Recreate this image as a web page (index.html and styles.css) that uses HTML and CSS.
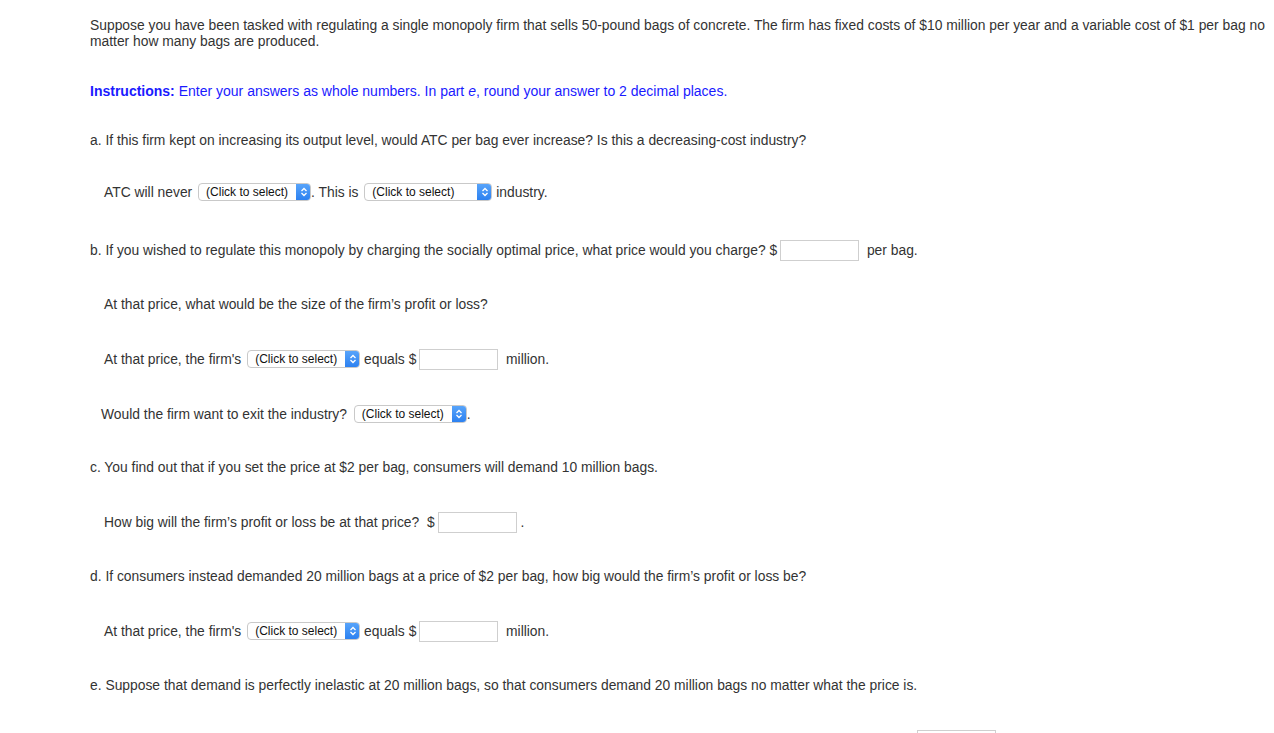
FILE: index.html
```html
<!DOCTYPE html>
<html>
<head>
<meta charset="utf-8">
<link rel="stylesheet" href="styles.css">
</head>
<body>
<div class="page">
  <p class="intro">Suppose you have been tasked with regulating a single monopoly firm that sells 50-pound bags of concrete. The firm has fixed costs of $10 million per year and a variable cost of $1 per bag no matter how many bags are produced.</p>

  <div class="row instr"><b>Instructions:</b>&nbsp;Enter your answers as whole numbers. In part <i>e</i>, round your answer to 2 decimal places.</div>

  <div class="row q ga">a. If this firm kept on increasing its output level, would ATC per bag ever increase? Is this a decreasing-cost industry?</div>

  <div class="row sub gatc">ATC will never&nbsp;<span class="sel w113"><span class="sel-t">(Click to select)</span><span class="step"><svg width="8" height="10" viewBox="0 0 8 10"><path d="M1.5 4 L4 1.5 L6.5 4 M1.5 6 L4 8.5 L6.5 6" fill="none" stroke="#fff" stroke-width="1.3"/></svg></span></span>. This is&nbsp;<span class="sel w128"><span class="sel-t">(Click to select)</span><span class="step"><svg width="8" height="10" viewBox="0 0 8 10"><path d="M1.5 4 L4 1.5 L6.5 4 M1.5 6 L4 8.5 L6.5 6" fill="none" stroke="#fff" stroke-width="1.3"/></svg></span></span>&nbsp;industry.</div>

  <div class="row q gb">b. If you wished to regulate this monopoly by charging the socially optimal price, what price would you charge? $<span class="inp"></span>&nbsp;&nbsp;per bag.</div>

  <div class="row sub">At that price, what would be the size of the firm’s profit or loss?</div>

  <div class="row sub g33">At that price, the firm's&nbsp;<span class="sel w113"><span class="sel-t">(Click to select)</span><span class="step"><svg width="8" height="10" viewBox="0 0 8 10"><path d="M1.5 4 L4 1.5 L6.5 4 M1.5 6 L4 8.5 L6.5 6" fill="none" stroke="#fff" stroke-width="1.3"/></svg></span></span>&nbsp;equals $<span class="inp"></span>&nbsp;&nbsp;million.</div>

  <div class="row sub2 g33">Would the firm want to exit the industry?&nbsp;<span class="sel w113 sel-gap"><span class="sel-t">(Click to select)</span><span class="step"><svg width="8" height="10" viewBox="0 0 8 10"><path d="M1.5 4 L4 1.5 L6.5 4 M1.5 6 L4 8.5 L6.5 6" fill="none" stroke="#fff" stroke-width="1.3"/></svg></span></span>.</div>

  <div class="row q g31">c. You find out that if you set the price at $2 per bag, consumers will demand 10 million bags.</div>

  <div class="row sub g33">How big will the firm’s profit or loss be at that price?&nbsp;&nbsp;$<span class="inp"></span>&nbsp;.</div>

  <div class="row q">d. If consumers instead demanded 20 million bags at a price of $2 per bag, how big would the firm’s profit or loss be?</div>

  <div class="row sub g33">At that price, the firm's&nbsp;<span class="sel w113"><span class="sel-t">(Click to select)</span><span class="step"><svg width="8" height="10" viewBox="0 0 8 10"><path d="M1.5 4 L4 1.5 L6.5 4 M1.5 6 L4 8.5 L6.5 6" fill="none" stroke="#fff" stroke-width="1.3"/></svg></span></span>&nbsp;equals $<span class="inp"></span>&nbsp;&nbsp;million.</div>

  <div class="row q">e. Suppose that demand is perfectly inelastic at 20 million bags, so that consumers demand 20 million bags no matter what the price is.</div>

  <div class="row last"><span class="inp"></span></div>
</div>
</body>
</html>
```

FILE: styles.css
```css
html, body {
  margin: 0;
  padding: 0;
  background: #fff;
  overflow: hidden;
}
.page {
  padding: 17px 0 0 90px;
  font-family: "Liberation Sans", Arial, sans-serif;
  font-size: 13.85px;
  color: #333;
  display: flex;
  flex-direction: column;
  height: 733px;
  box-sizing: border-box;
}
.intro {
  margin: 0;
  line-height: 16px;
}
.row {
  height: 22px;
  line-height: 22px;
  margin-top: 32px;
  display: flex;
  align-items: center;
  white-space: nowrap;
  flex-shrink: 0;
}
.instr {
  color: #1a1aff;
  display: block;
  font-size: 14px;
  margin-top: 31px;
}
.ga { margin-top: 27px; }
.gatc { margin-top: 30px; }
.gb { margin-top: 36px; }
.g33 { margin-top: 33px; }
.g31 { margin-top: 31px; }
.sub { padding-left: 14px; }
.sub2 { padding-left: 11px; }
.last { padding-left: 824px; align-items: flex-start; margin-top: 34px; }

.sel {
  display: inline-flex;
  align-items: stretch;
  height: 18px;
  box-sizing: border-box;
  border: 1px solid #c9c9c9;
  border-radius: 4px;
  background: #fff;
  font-size: 12px;
  line-height: 16px;
  color: #111;
  overflow: hidden;
  margin-left: 2px;
}
.sel-gap { margin-left: 3px; }
.w113 { width: 113px; }
.w128 { width: 128px; }
.sel-t {
  flex: 1;
  padding-left: 7px;
}
.step {
  width: 15px;
  background: linear-gradient(#5aa6fb, #2a7ff0);
  display: flex;
  align-items: center;
  justify-content: center;
  margin: -1px -1px -1px 0;
  border-radius: 0 4px 4px 0;
}
.inp {
  display: inline-block;
  width: 79px;
  height: 21px;
  box-sizing: border-box;
  border: 1px solid #cfcfcf;
  background: #fff;
  margin-left: 3px;
}
```
